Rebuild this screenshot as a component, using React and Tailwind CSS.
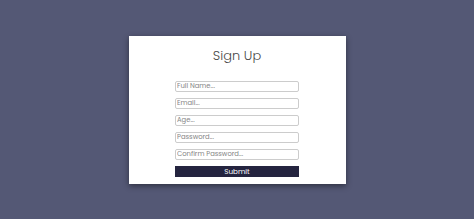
import React from "react";

export default function App() {
  const fields = ["Full Name...", "Email...", "Age...", "Password...", "Confirm Password..."];
  return (
    <div className="w-[474px] h-[219px] bg-[#545875] flex items-center justify-center" style={{ fontFamily: "Poppins, 'Open Sans', 'Noto Sans', sans-serif" }}>
      <div className="w-[217px] h-[148px] bg-white shadow-[0_2px_6px_rgba(0,0,0,0.45)] flex flex-col items-center pt-[12px]">
        <h1 className="text-[13px] leading-[16px] font-light text-[#4a4a4a]">Sign Up</h1>
        <form className="mt-[17px] flex flex-col gap-[6px] w-[124px]" onSubmit={(e) => e.preventDefault()}>
          {fields.map((f) => (
            <input
              key={f}
              placeholder={f}
              className="h-[11px] w-full border border-[#cccccc] rounded-[2px] px-[1px] text-[6.8px] leading-[9px] text-[#777] placeholder:text-[#858585] outline-none"
            />
          ))}
          <button type="submit" className="h-[11px] w-full bg-[#24243f] text-white text-[7.2px] leading-[11px]">
            Submit
          </button>
        </form>
      </div>
    </div>
  );
}
